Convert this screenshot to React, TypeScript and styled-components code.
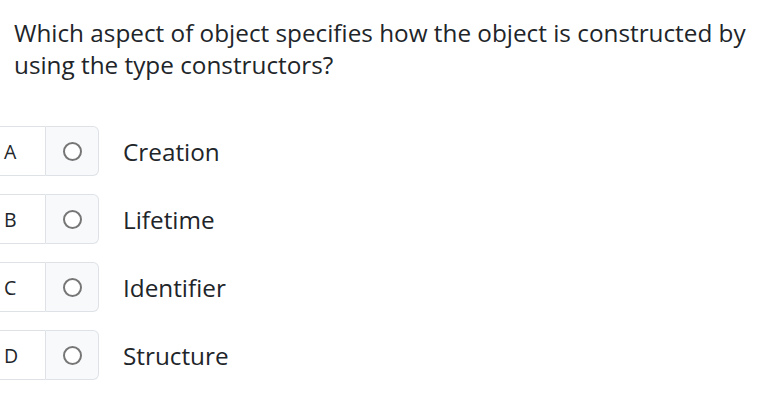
import React from "react";
import styled, { createGlobalStyle } from "styled-components";

const GlobalStyle = createGlobalStyle`
  html, body {
    margin: 0;
    padding: 0;
    background: #ffffff;
  }
  body {
    font-family: "Open Sans", "Noto Sans", sans-serif;
    color: #212529;
    overflow: hidden;
  }
`;

const Page = styled.div`
  width: 775px;
  height: 400px;
  padding: 17px 14px 0 14px;
  box-sizing: border-box;
`;

const Question = styled.p`
  margin: 0;
  font-size: 24.3px;
  line-height: 32px;
  color: #212529;
`;

const OptionList = styled.div`
  display: flex;
  flex-direction: column;
  gap: 18px;
  margin: 45px 0 0 -22px;
`;

const OptionRow = styled.label`
  display: flex;
  align-items: center;
  gap: 24px;
  cursor: pointer;
`;

const InputGroup = styled.div`
  display: flex;
  height: 50px;
`;

const LetterCell = styled.span`
  display: flex;
  align-items: center;
  box-sizing: border-box;
  width: 54px;
  padding-left: 11px;
  font-size: 19.5px;
  color: #212529;
  background: #ffffff;
  border: 1px solid #dee2e6;
  border-radius: 6px 0 0 6px;
`;

const RadioCell = styled.span`
  display: flex;
  align-items: center;
  justify-content: center;
  box-sizing: border-box;
  width: 53px;
  background: #f8f9fa;
  border: 1px solid #dee2e6;
  border-left: none;
  border-radius: 0 6px 6px 0;
`;

const Radio = styled.span`
  display: block;
  width: 19px;
  height: 19px;
  box-sizing: border-box;
  border: 2px solid #767676;
  border-radius: 50%;
  background: #ffffff;
`;

const OptionText = styled.span`
  font-size: 24.3px;
  color: #212529;
`;

const options = [
  { letter: "A", text: "Creation" },
  { letter: "B", text: "Lifetime" },
  { letter: "C", text: "Identifier" },
  { letter: "D", text: "Structure" },
];

const App = () => {
  return (
    <Page>
      <GlobalStyle />
      <Question>
        Which aspect of object specifies how the object is constructed by
        using the type constructors?
      </Question>
      <OptionList>
        {options.map((option) => (
          <OptionRow key={option.letter}>
            <InputGroup>
              <LetterCell>{option.letter}</LetterCell>
              <RadioCell>
                <Radio />
              </RadioCell>
            </InputGroup>
            <OptionText>{option.text}</OptionText>
          </OptionRow>
        ))}
      </OptionList>
    </Page>
  );
};

export default App;
